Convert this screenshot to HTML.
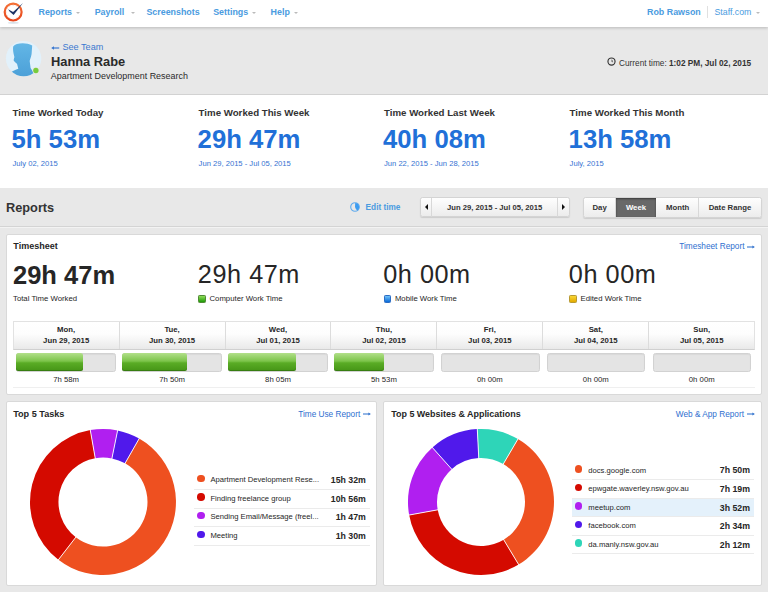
<!DOCTYPE html>
<html><head><meta charset="utf-8">
<style>
*{margin:0;padding:0;box-sizing:border-box}
html,body{width:768px;height:592px;overflow:hidden;background:#e8e8e8;font-family:"Liberation Sans",sans-serif;color:#333;white-space:nowrap}
.a{position:absolute;white-space:nowrap}
.nav{position:absolute;left:0;top:0;width:768px;height:27px;background:#fff;box-shadow:0 1px 3px rgba(0,0,0,.2);z-index:3}
.navi{position:absolute;top:6.5px;font-size:8.9px;font-weight:bold;color:#4a9be0;line-height:10px}
.caret{position:absolute;top:12px;width:0;height:0;border-left:2.5px solid transparent;border-right:2.5px solid transparent;border-top:2.5px solid #bbb}
.prof{position:absolute;left:0;top:27px;width:768px;height:68px;background:#e8e8e8;border-bottom:1px solid #d2d2d2}
.stats{position:absolute;left:0;top:95px;width:768px;height:93px;background:#fff}
.st{position:absolute;top:0}
.st .h{position:absolute;top:12px;left:0;font-size:9.7px;font-weight:bold;color:#333;line-height:12px}
.st .v{position:absolute;top:29.5px;left:-1px;font-size:25.7px;font-weight:bold;color:#2170d8;line-height:28px}
.st .d{position:absolute;top:63.5px;left:0;font-size:7.62px;color:#3673d2;line-height:9px}
.rep{position:absolute;left:0;top:188px;width:768px;height:404px;background:#e8e8e8}
.panel{position:absolute;background:#fff;border:1px solid #d9d9d9;border-radius:2px}
.btn{position:absolute;background:linear-gradient(#fefefe,#ececec);border:1px solid #d4d4d4;border-radius:2.5px;box-shadow:0 1px 1px rgba(0,0,0,.12)}
.bt{position:absolute;top:0;height:19px;line-height:19px;font-size:7.75px;font-weight:bold;color:#333;text-align:center}

.t{position:absolute;line-height:1;color:#262626;white-space:nowrap}
.b{font-weight:bold}
.c{text-align:center}
.lk{color:#2f6fcf}
.sq{position:absolute;width:7.5px;height:7.6px;border-radius:1.2px;border:0.7px solid}
.ghead{position:absolute;background:linear-gradient(#fff 0%,#fdfdfd 45%,#e9e9e9 100%);border:1px solid #e2e2e2;border-bottom-color:#d0d0d0}
.track{position:absolute;background:#e4e4e4;border:1px solid #d2d2d2;border-radius:2.5px;box-shadow:inset 0 1px 1px rgba(0,0,0,.05)}
.fill{position:absolute;left:-1px;top:-1px;bottom:0;background:linear-gradient(#b2e08a 0%,#7cc44a 45%,#5aac25 55%,#459516 100%);border-radius:2.5px;box-shadow:inset 0 -1px 0 rgba(40,100,10,.5)}
.dot{position:absolute;width:7.6px;height:7.6px;border-radius:50%;margin:-0.3px 0 0 0.1px}
</style></head><body>
<div class="nav">
  <svg class="a" style="left:0;top:0" width="30" height="27" viewBox="0 0 30 27">
    <defs><linearGradient id="lg" x1="0" y1="0" x2="0" y2="1"><stop offset="0" stop-color="#f47036"/><stop offset="1" stop-color="#e6441a"/></linearGradient></defs>
    <ellipse cx="13.3" cy="22.8" rx="5.5" ry="0.9" fill="#d5e0e8"/>
    <circle cx="13.15" cy="12.05" r="8.45" fill="#fff" stroke="url(#lg)" stroke-width="2.2"/>
    <circle cx="13.15" cy="5.15" r="0.5" fill="#f5a080" opacity="0.6"/><circle cx="16.60" cy="6.07" r="0.5" fill="#f5a080" opacity="0.6"/><circle cx="19.13" cy="8.60" r="0.5" fill="#f5a080" opacity="0.6"/><circle cx="20.05" cy="12.05" r="0.5" fill="#f5a080" opacity="0.6"/><circle cx="19.13" cy="15.50" r="0.5" fill="#f5a080" opacity="0.6"/><circle cx="16.60" cy="18.03" r="0.5" fill="#f5a080" opacity="0.6"/><circle cx="13.15" cy="18.95" r="0.5" fill="#f5a080" opacity="0.6"/><circle cx="9.70" cy="18.03" r="0.5" fill="#f5a080" opacity="0.6"/><circle cx="7.17" cy="15.50" r="0.5" fill="#f5a080" opacity="0.6"/><circle cx="6.25" cy="12.05" r="0.5" fill="#f5a080" opacity="0.6"/><circle cx="7.17" cy="8.60" r="0.5" fill="#f5a080" opacity="0.6"/><circle cx="9.70" cy="6.07" r="0.5" fill="#f5a080" opacity="0.6"/>
    <path d="M19 4.8 L23.2 2.8 L21.6 7 Z" fill="#fff"/>
    <path d="M8.1 9.3 L13.1 12.1 L23 2.9 L13.6 15 L9.8 11.7 Z" fill="#1c3466"/>
  </svg>
  <div class="navi" style="left:38.5px">Reports</div><div class="caret" style="left:76px"></div>
  <div class="navi" style="left:94.7px">Payroll</div><div class="caret" style="left:131px"></div>
  <div class="navi" style="left:146.4px">Screenshots</div>
  <div class="navi" style="left:213.2px">Settings</div><div class="caret" style="left:252px"></div>
  <div class="navi" style="left:270.6px">Help</div><div class="caret" style="left:294px"></div>
  <div class="navi" style="left:647px">Rob Rawson</div>
  <div class="a" style="left:707px;top:6px;width:1px;height:12px;background:#e0e0e0"></div>
  <div class="navi" style="left:714.5px;font-weight:normal;font-size:8.75px">Staff.com</div><div class="caret" style="left:756px"></div>
</div>
<div class="prof">
  <svg class="a" style="left:5px;top:13px" width="38" height="38" viewBox="0 0 38 38">
    <defs><clipPath id="cc"><circle cx="18.6" cy="18.6" r="17.7"/></clipPath></defs>
    <circle cx="18.6" cy="18.6" r="17.7" fill="#e2f1fb"/>
    <g clip-path="url(#cc)"><defs><linearGradient id="sg" x1="0" y1="0" x2="0" y2="1"><stop offset="0" stop-color="#62b6e6"/><stop offset="1" stop-color="#4a9ed6"/></linearGradient></defs><path d="M8.2 6.5 C11 2.8 21 2.2 27.2 5.5 L26.6 14 C26.2 17 25 19 24.7 21 L25.6 28 C27 31 29.5 33 32 35 L36 40 L0 40 L3 34.5 C6 31.5 10 30 13.3 28.8 L12 23.8 C10.6 22.6 9.2 21.6 8.6 20.3 L9.4 17 C8.6 14 7.6 10 8.2 6.5 Z" fill="url(#sg)"/></g>
    <circle cx="30.9" cy="30.5" r="3.4" fill="#e8e8e8"/>
    <circle cx="30.9" cy="30.5" r="2.7" fill="#78cc3c"/>
  </svg>
  <div class="a" style="left:62.5px;top:14.7px;font-size:9.1px;color:#3a78d0;line-height:10px">See Team</div><svg class="a" style="left:50.8px;top:18px" width="9" height="6" viewBox="0 0 9 6"><path d="M1.5 3 H8.2" stroke="#3a78d0" stroke-width="1.2"/><path d="M3 1.2 L0.2 3 L3 4.8 Z" fill="#3a78d0"/></svg>
  <div class="a" style="left:51px;top:28px;font-size:12.85px;font-weight:bold;color:#2a2a2a;line-height:14px">Hanna Rabe</div>
  <div class="a" style="left:50.8px;top:44.3px;font-size:8.95px;color:#2a2a2a;line-height:10px">Apartment Development Research</div>
  <svg class="a" style="left:607.1px;top:29.9px" width="9" height="9" viewBox="0 0 9 9"><circle cx="4.5" cy="4.5" r="3.55" fill="none" stroke="#333" stroke-width="1.15"/><path d="M4.4 2.3 L4.4 4.7 L6.2 5.6 Q6.3 3 4.4 2.3 Z" fill="#777"/></svg>
  <div class="a" style="left:619px;top:32px;font-size:8.25px;color:#333;line-height:10px">Current time: <b>1:02 PM, Jul 02, 2015</b></div>
</div>
<div class="stats">
  <div class="st" style="left:12.5px"><div class="h">Time Worked Today</div><div class="v">5h 53m</div><div class="d">July 02, 2015</div></div>
  <div class="st" style="left:198.6px"><div class="h">Time Worked This Week</div><div class="v">29h 47m</div><div class="d">Jun 29, 2015 - Jul 05, 2015</div></div>
  <div class="st" style="left:384px"><div class="h">Time Worked Last Week</div><div class="v">40h 08m</div><div class="d">Jun 22, 2015 - Jun 28, 2015</div></div>
  <div class="st" style="left:569.6px"><div class="h">Time Worked This Month</div><div class="v">13h 58m</div><div class="d">July, 2015</div></div>
</div>
<div class="rep">
  <div class="a" style="left:6px;top:13px;font-size:12.75px;font-weight:bold;color:#333;line-height:14px">Reports</div>
  <svg class="a" style="left:349.8px;top:13.7px" width="10" height="10" viewBox="0 0 10 10"><circle cx="5" cy="5" r="4.3" fill="none" stroke="#5fabee" stroke-width="1.1"/><path d="M5 5 L5.2 0.9 A4.1 4.1 0 0 1 7.2 8.5 Q5.6 7 5 5 Z" fill="#3d9cf0"/></svg>
  <div class="a" style="left:365.6px;top:15px;font-size:8.25px;font-weight:bold;color:#4a9be0;line-height:10px">Edit time</div>
  <div class="btn" style="left:420px;top:8.8px;width:149.5px;height:20.6px">
    <div class="bt" style="left:0;width:11px;border-right:1px solid #d8d8d8"><div class="a" style="left:4px;top:5.8px;width:0;height:0;border-top:3px solid transparent;border-bottom:3px solid transparent;border-right:3.6px solid #111"></div></div>
    <div class="bt" style="left:11px;width:125.4px;font-size:7.65px">Jun 29, 2015 - Jul 05, 2015</div>
    <div class="bt" style="left:136.4px;width:11.1px;border-left:1px solid #d8d8d8"><div class="a" style="left:3.8px;top:5.8px;width:0;height:0;border-top:3px solid transparent;border-bottom:3px solid transparent;border-left:3.6px solid #111"></div></div>
  </div>
  <div class="btn" style="left:583px;top:9px;width:178.5px;height:20.7px">
    <div class="bt" style="left:0;width:32.2px;border-right:1px solid #d8d8d8">Day</div>
    <div class="bt" style="left:32.2px;width:39.6px;height:18.7px;background:#686868;box-shadow:inset 0 1px 2px rgba(0,0,0,.45);color:#fff">Week</div>
    <div class="bt" style="left:71.8px;width:43.2px;padding-left:1.4px;border-right:1px solid #d8d8d8">Month</div>
    <div class="bt" style="left:115px;width:62px">Date Range</div>
  </div>
  <div class="a" style="left:0;top:38px;width:768px;height:1px;background:#d4d4d4"></div>
  <div class="a" style="left:0;top:39px;width:768px;height:1px;background:#f3f3f3"></div>
</div>
<div class="panel" style="left:6px;top:234px;width:755.5px;height:161px"></div>
<div class="t b" style="left:13.3px;top:242.4px;font-size:9px">Timesheet</div>
<div class="t lk" style="left:679.2px;top:243.4px;font-size:8.25px">Timesheet Report</div><svg class="a" style="left:746.5px;top:243.6px" width="9" height="6" viewBox="0 0 9 6"><path d="M0 3 H6.5" stroke="#3a78d0" stroke-width="1.1"/><path d="M5.4 1.5 L7.9 3 L5.4 4.5 Z" fill="#3a78d0"/></svg>
<div class="t b" style="left:13px;top:262.6px;font-size:25.5px">29h 47m</div>
<div class="t" style="left:197.8px;top:261.5px;font-size:25.25px;letter-spacing:0.55px">29h 47m</div>
<div class="sq" style="left:198.3px;top:295.1px;border-color:#4f8a34;background:linear-gradient(#8fdc58,#1f9a08)"></div>
<div class="t" style="left:209.5px;top:295.04px;font-size:7.75px">Computer Work Time</div>
<div class="t" style="left:383.2px;top:261.5px;font-size:25.25px;letter-spacing:0.55px">0h 00m</div>
<div class="sq" style="left:383.8px;top:295.1px;border-color:#2a6cc4;background:linear-gradient(#70c2f8,#0b6ad8)"></div>
<div class="t" style="left:394.9px;top:295.04px;font-size:7.75px">Mobile Work Time</div>
<div class="t" style="left:568.8px;top:261.5px;font-size:25.25px;letter-spacing:0.55px">0h 00m</div>
<div class="sq" style="left:569.2px;top:295.1px;border-color:#b89a30;background:linear-gradient(#f9d635,#e2aa00)"></div>
<div class="t" style="left:580.5px;top:295.04px;font-size:7.75px">Edited Work Time</div>
<div class="t" style="left:13px;top:295.04px;font-size:7.75px">Total Time Worked</div>
<div class="ghead" style="left:13.2px;top:320.6px;width:741.5px;height:29.2px"></div>
<div class="t b c" style="left:13.20px;width:105.93px;top:325.94px;font-size:7.75px">Mon,</div>
<div class="t b c" style="left:13.20px;width:105.93px;top:337.1px;font-size:7.75px">Jun 29, 2015</div>
<div class="track" style="left:15.70px;top:352.8px;width:100.80px;height:18.8px"><div class="fill" style="width:67.4px"></div></div>
<div class="t c" style="left:13.20px;width:105.93px;top:375.84px;font-size:7.75px">7h 58m</div>
<div class="a" style="left:118.63px;top:322px;width:1px;height:27px;background:#dcdcdc"></div>
<div class="t b c" style="left:119.13px;width:105.93px;top:325.94px;font-size:7.75px">Tue,</div>
<div class="t b c" style="left:119.13px;width:105.93px;top:337.1px;font-size:7.75px">Jun 30, 2015</div>
<div class="track" style="left:121.90px;top:352.8px;width:100.40px;height:18.8px"><div class="fill" style="width:65.4px"></div></div>
<div class="t c" style="left:119.13px;width:105.93px;top:375.84px;font-size:7.75px">7h 50m</div>
<div class="a" style="left:224.56px;top:322px;width:1px;height:27px;background:#dcdcdc"></div>
<div class="t b c" style="left:225.06px;width:105.93px;top:325.94px;font-size:7.75px">Wed,</div>
<div class="t b c" style="left:225.06px;width:105.93px;top:337.1px;font-size:7.75px">Jul 01, 2015</div>
<div class="track" style="left:228.10px;top:352.8px;width:100.00px;height:18.8px"><div class="fill" style="width:67.8px"></div></div>
<div class="t c" style="left:225.06px;width:105.93px;top:375.84px;font-size:7.75px">8h 05m</div>
<div class="a" style="left:330.49px;top:322px;width:1px;height:27px;background:#dcdcdc"></div>
<div class="t b c" style="left:330.99px;width:105.93px;top:325.94px;font-size:7.75px">Thu,</div>
<div class="t b c" style="left:330.99px;width:105.93px;top:337.1px;font-size:7.75px">Jul 02, 2015</div>
<div class="track" style="left:334.30px;top:352.8px;width:99.60px;height:18.8px"><div class="fill" style="width:49.5px"></div></div>
<div class="t c" style="left:330.99px;width:105.93px;top:375.84px;font-size:7.75px">5h 53m</div>
<div class="a" style="left:436.41px;top:322px;width:1px;height:27px;background:#dcdcdc"></div>
<div class="t b c" style="left:436.91px;width:105.93px;top:325.94px;font-size:7.75px">Fri,</div>
<div class="t b c" style="left:436.91px;width:105.93px;top:337.1px;font-size:7.75px">Jul 03, 2015</div>
<div class="track" style="left:440.50px;top:352.8px;width:99.20px;height:18.8px"></div>
<div class="t c" style="left:436.91px;width:105.93px;top:375.84px;font-size:7.75px">0h 00m</div>
<div class="a" style="left:542.34px;top:322px;width:1px;height:27px;background:#dcdcdc"></div>
<div class="t b c" style="left:542.84px;width:105.93px;top:325.94px;font-size:7.75px">Sat,</div>
<div class="t b c" style="left:542.84px;width:105.93px;top:337.1px;font-size:7.75px">Jul 04, 2015</div>
<div class="track" style="left:546.70px;top:352.8px;width:98.80px;height:18.8px"></div>
<div class="t c" style="left:542.84px;width:105.93px;top:375.84px;font-size:7.75px">0h 00m</div>
<div class="a" style="left:648.27px;top:322px;width:1px;height:27px;background:#dcdcdc"></div>
<div class="t b c" style="left:648.77px;width:105.93px;top:325.94px;font-size:7.75px">Sun,</div>
<div class="t b c" style="left:648.77px;width:105.93px;top:337.1px;font-size:7.75px">Jul 05, 2015</div>
<div class="track" style="left:652.90px;top:352.8px;width:98.40px;height:18.8px"></div>
<div class="t c" style="left:648.77px;width:105.93px;top:375.84px;font-size:7.75px">0h 00m</div>
<div class="a" style="left:13.2px;top:387px;width:741.5px;height:1px;background:#efefef"></div>
<div class="panel" style="left:6px;top:401px;width:371.3px;height:184.5px"></div>
<div class="panel" style="left:383px;top:401px;width:378.5px;height:184.5px"></div>
<div class="t b" style="left:13.2px;top:409.6px;font-size:9.1px">Top 5 Tasks</div>
<div class="t lk" style="left:298.2px;top:410.9px;font-size:8.25px">Time Use Report</div><svg class="a" style="left:362.5px;top:411.3px" width="9" height="6" viewBox="0 0 9 6"><path d="M0 3 H6.5" stroke="#3a78d0" stroke-width="1.1"/><path d="M5.4 1.5 L7.9 3 L5.4 4.5 Z" fill="#3a78d0"/></svg>
<div class="t b" style="left:391.2px;top:410.2px;font-size:8.95px">Top 5 Websites &amp; Applications</div>
<div class="t lk" style="left:675.8px;top:410.9px;font-size:8.25px">Web &amp; App Report</div><svg class="a" style="left:746.5px;top:411.3px" width="9" height="6" viewBox="0 0 9 6"><path d="M0 3 H6.5" stroke="#3a78d0" stroke-width="1.1"/><path d="M5.4 1.5 L7.9 3 L5.4 4.5 Z" fill="#3a78d0"/></svg>
<svg class="a" style="left:23.3px;top:422.1px" width="160" height="160" viewBox="0 0 160 160"><path d="M116.17 16.59 A73 73 0 1 1 35.39 137.79 L52.81 115.23 A44.5 44.5 0 1 0 102.05 41.35 Z" fill="#ee5020"/>
<path d="M35.39 137.79 A73 73 0 0 1 67.28 8.12 L72.25 36.18 A44.5 44.5 0 0 0 52.81 115.23 Z" fill="#d40a00"/>
<path d="M67.28 8.12 A73 73 0 0 1 94.61 8.48 L88.91 36.40 A44.5 44.5 0 0 0 72.25 36.18 Z" fill="#b01ff0"/>
<path d="M94.61 8.48 A73 73 0 0 1 116.17 16.59 L102.05 41.35 A44.5 44.5 0 0 0 88.91 36.40 Z" fill="#5019eb"/>
<line x1="101.55" y1="42.21" x2="116.66" y2="15.72" stroke="#fff" stroke-width="0.9"/>
<line x1="53.42" y1="114.43" x2="34.78" y2="138.58" stroke="#fff" stroke-width="0.9"/>
<line x1="72.42" y1="37.16" x2="67.11" y2="7.13" stroke="#fff" stroke-width="0.9"/>
<line x1="88.71" y1="37.38" x2="94.81" y2="7.50" stroke="#fff" stroke-width="0.9"/></svg>
<svg class="a" style="left:400.8px;top:421.5px" width="160" height="160" viewBox="0 0 160 160"><path d="M116.94 17.04 A73 73 0 0 1 117.63 142.55 L102.68 117.70 A44 44 0 0 0 102.27 42.05 Z" fill="#ee5020"/>
<path d="M117.63 142.55 A73 73 0 0 1 8.17 93.03 L36.71 87.85 A44 44 0 0 0 102.68 117.70 Z" fill="#d40a00"/>
<path d="M8.17 93.03 A73 73 0 0 1 31.39 25.54 L50.70 47.17 A44 44 0 0 0 36.71 87.85 Z" fill="#b01ff0"/>
<path d="M31.39 25.54 A73 73 0 0 1 76.31 7.09 L77.77 36.06 A44 44 0 0 0 50.70 47.17 Z" fill="#5019eb"/>
<path d="M76.31 7.09 A73 73 0 0 1 116.94 17.04 L102.27 42.05 A44 44 0 0 0 77.77 36.06 Z" fill="#2ed5b8"/>
<line x1="101.76" y1="42.91" x2="117.45" y2="16.17" stroke="#fff" stroke-width="0.9"/>
<line x1="102.17" y1="116.85" x2="118.15" y2="143.41" stroke="#fff" stroke-width="0.9"/>
<line x1="37.69" y1="87.67" x2="7.19" y2="93.21" stroke="#fff" stroke-width="0.9"/>
<line x1="51.37" y1="47.92" x2="30.72" y2="24.79" stroke="#fff" stroke-width="0.9"/>
<line x1="77.82" y1="37.06" x2="76.26" y2="6.09" stroke="#fff" stroke-width="0.9"/></svg>
<div class="dot" style="left:197.30px;top:475.00px;background:#ee5020"></div>
<div class="t" style="left:210.4px;top:476.14px;font-size:7.65px">Apartment Development Rese...</div>
<div class="t b r" style="right:402.20px;top:475.99px;font-size:8.75px">15h 32m</div>
<div class="a" style="left:194px;top:489.00px;width:176px;height:1px;background:#ebebeb"></div>
<div class="dot" style="left:197.30px;top:493.60px;background:#d40a00"></div>
<div class="t" style="left:210.4px;top:494.74px;font-size:7.65px">Finding freelance group</div>
<div class="t b r" style="right:402.20px;top:494.59px;font-size:8.75px">10h 56m</div>
<div class="a" style="left:194px;top:507.60px;width:176px;height:1px;background:#ebebeb"></div>
<div class="dot" style="left:197.30px;top:512.20px;background:#b01ff0"></div>
<div class="t" style="left:210.4px;top:513.34px;font-size:7.65px">Sending Email/Message (freel...</div>
<div class="t b r" style="right:402.20px;top:513.19px;font-size:8.75px">1h 47m</div>
<div class="a" style="left:194px;top:526.20px;width:176px;height:1px;background:#ebebeb"></div>
<div class="dot" style="left:197.30px;top:530.80px;background:#5019eb"></div>
<div class="t" style="left:210.4px;top:531.94px;font-size:7.65px">Meeting</div>
<div class="t b r" style="right:402.20px;top:531.79px;font-size:8.75px">1h 30m</div>
<div class="a" style="left:194px;top:544.80px;width:176px;height:1px;background:#ebebeb"></div>
<div class="a" style="left:571.6px;top:498.4px;width:182.4px;height:18.5px;background:#e4f1fb"></div>
<div class="dot" style="left:574.70px;top:465.50px;background:#ee5020"></div>
<div class="t" style="left:588.3px;top:466.64px;font-size:7.65px">docs.google.com</div>
<div class="t b r" style="right:18.00px;top:466.49px;font-size:8.75px">7h 50m</div>
<div class="a" style="left:571.6px;top:479.10px;width:182.4px;height:1px;background:#ebebeb"></div>
<div class="dot" style="left:574.70px;top:484.05px;background:#d40a00"></div>
<div class="t" style="left:588.3px;top:485.19px;font-size:7.65px">epwgate.waverley.nsw.gov.au</div>
<div class="t b r" style="right:18.00px;top:485.04px;font-size:8.75px">7h 19m</div>
<div class="a" style="left:571.6px;top:497.65px;width:182.4px;height:1px;background:#ebebeb"></div>
<div class="dot" style="left:574.70px;top:502.60px;background:#b01ff0"></div>
<div class="t" style="left:588.3px;top:503.74px;font-size:7.65px">meetup.com</div>
<div class="t b r" style="right:18.00px;top:503.59px;font-size:8.75px">3h 52m</div>
<div class="a" style="left:571.6px;top:516.20px;width:182.4px;height:1px;background:#ebebeb"></div>
<div class="dot" style="left:574.70px;top:521.15px;background:#5019eb"></div>
<div class="t" style="left:588.3px;top:522.29px;font-size:7.65px">facebook.com</div>
<div class="t b r" style="right:18.00px;top:522.14px;font-size:8.75px">2h 34m</div>
<div class="a" style="left:571.6px;top:534.75px;width:182.4px;height:1px;background:#ebebeb"></div>
<div class="dot" style="left:574.70px;top:539.70px;background:#2ed5b8"></div>
<div class="t" style="left:588.3px;top:540.84px;font-size:7.65px">da.manly.nsw.gov.au</div>
<div class="t b r" style="right:18.00px;top:540.69px;font-size:8.75px">2h 12m</div>
<div class="a" style="left:571.6px;top:553.30px;width:182.4px;height:1px;background:#ebebeb"></div>
</body></html>
